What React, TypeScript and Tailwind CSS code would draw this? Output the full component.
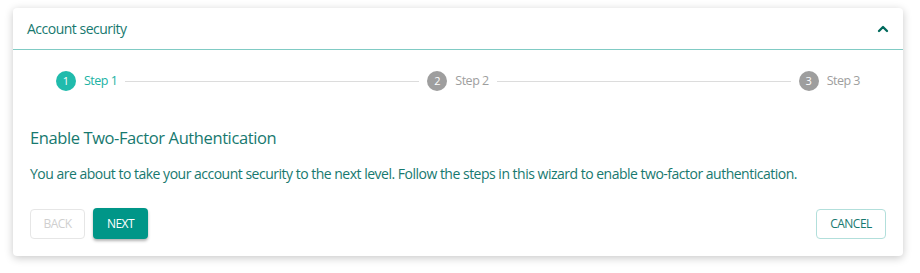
import { ChevronUp } from 'lucide-react';

const steps = [
  { n: 1, label: 'Step 1', active: true },
  { n: 2, label: 'Step 2', active: false },
  { n: 3, label: 'Step 3', active: false },
];

export default function App() {
  return (
    <div
      className="min-h-[273px] bg-white pt-2 pl-[13px] pr-[17px] tracking-[-0.5px]"
      style={{ fontFamily: '"Open Sans", "Noto Sans", sans-serif' }}
    >
      <div className="rounded bg-white shadow-[0_2px_8px_rgba(0,0,0,0.22)]">
        {/* Header */}
        <div className="flex h-[42px] items-center justify-between border-b border-[#80cbc4] pl-[14px] pr-[12px]">
          <span className="text-[14px] text-[#17796f]">Account security</span>
          <ChevronUp className="h-4 w-4 text-[#00695c]" strokeWidth={3.5} />
        </div>

        {/* Stepper */}
        <div className="flex items-center pl-[43px] pr-[43px] pt-[21px]">
          {steps.map((s, i) => (
            <div key={s.n} className={i < steps.length - 1 ? 'flex flex-1 items-center' : 'flex items-center'}>
              <div className="flex items-center gap-2">
                <span
                  className={
                    s.active
                      ? 'flex h-5 w-5 items-center justify-center rounded-full bg-[#20bbac] text-[11px] tracking-normal text-white'
                      : 'flex h-5 w-5 items-center justify-center rounded-full bg-[#9e9e9e] text-[11px] tracking-normal text-white'
                  }
                >
                  {s.n}
                </span>
                <span className={s.active ? 'text-[12.5px] text-[#20b2a4]' : 'text-[12.5px] text-[#9e9e9e]'}>{s.label}</span>
              </div>
              {i < steps.length - 1 && <div className="mx-2 h-px flex-1 bg-[#dcdcdc]" />}
            </div>
          ))}
        </div>

        {/* Content */}
        <div className="px-[17px] pt-[35px]">
          <h2 className="text-[16.5px] leading-6 tracking-[-0.4px] text-[#17796f]">Enable Two-Factor Authentication</h2>
          <p className="mt-[12px] text-[14px] leading-6 text-[#17796f]">
            You are about to take your account security to the next level. Follow the steps in this wizard to enable two-factor authentication.
          </p>
        </div>

        {/* Actions */}
        <div className="flex items-center justify-between px-[17px] pb-[17px] pt-[22px]">
          <div className="flex items-center gap-2">
            <button className="h-[30px] w-[55px] rounded border border-[#e6e6e6] text-[12px] text-[#cfcfcf]">BACK</button>
            <button className="h-[31px] w-[55px] rounded bg-[#009688] text-[12px] text-white shadow-[0_2px_3px_rgba(0,0,0,0.3)]">NEXT</button>
          </div>
          <button className="h-[30px] w-[70px] rounded border border-[#b2dfdb] text-[12px] text-[#17796f]">CANCEL</button>
        </div>
      </div>
    </div>
  );
}
